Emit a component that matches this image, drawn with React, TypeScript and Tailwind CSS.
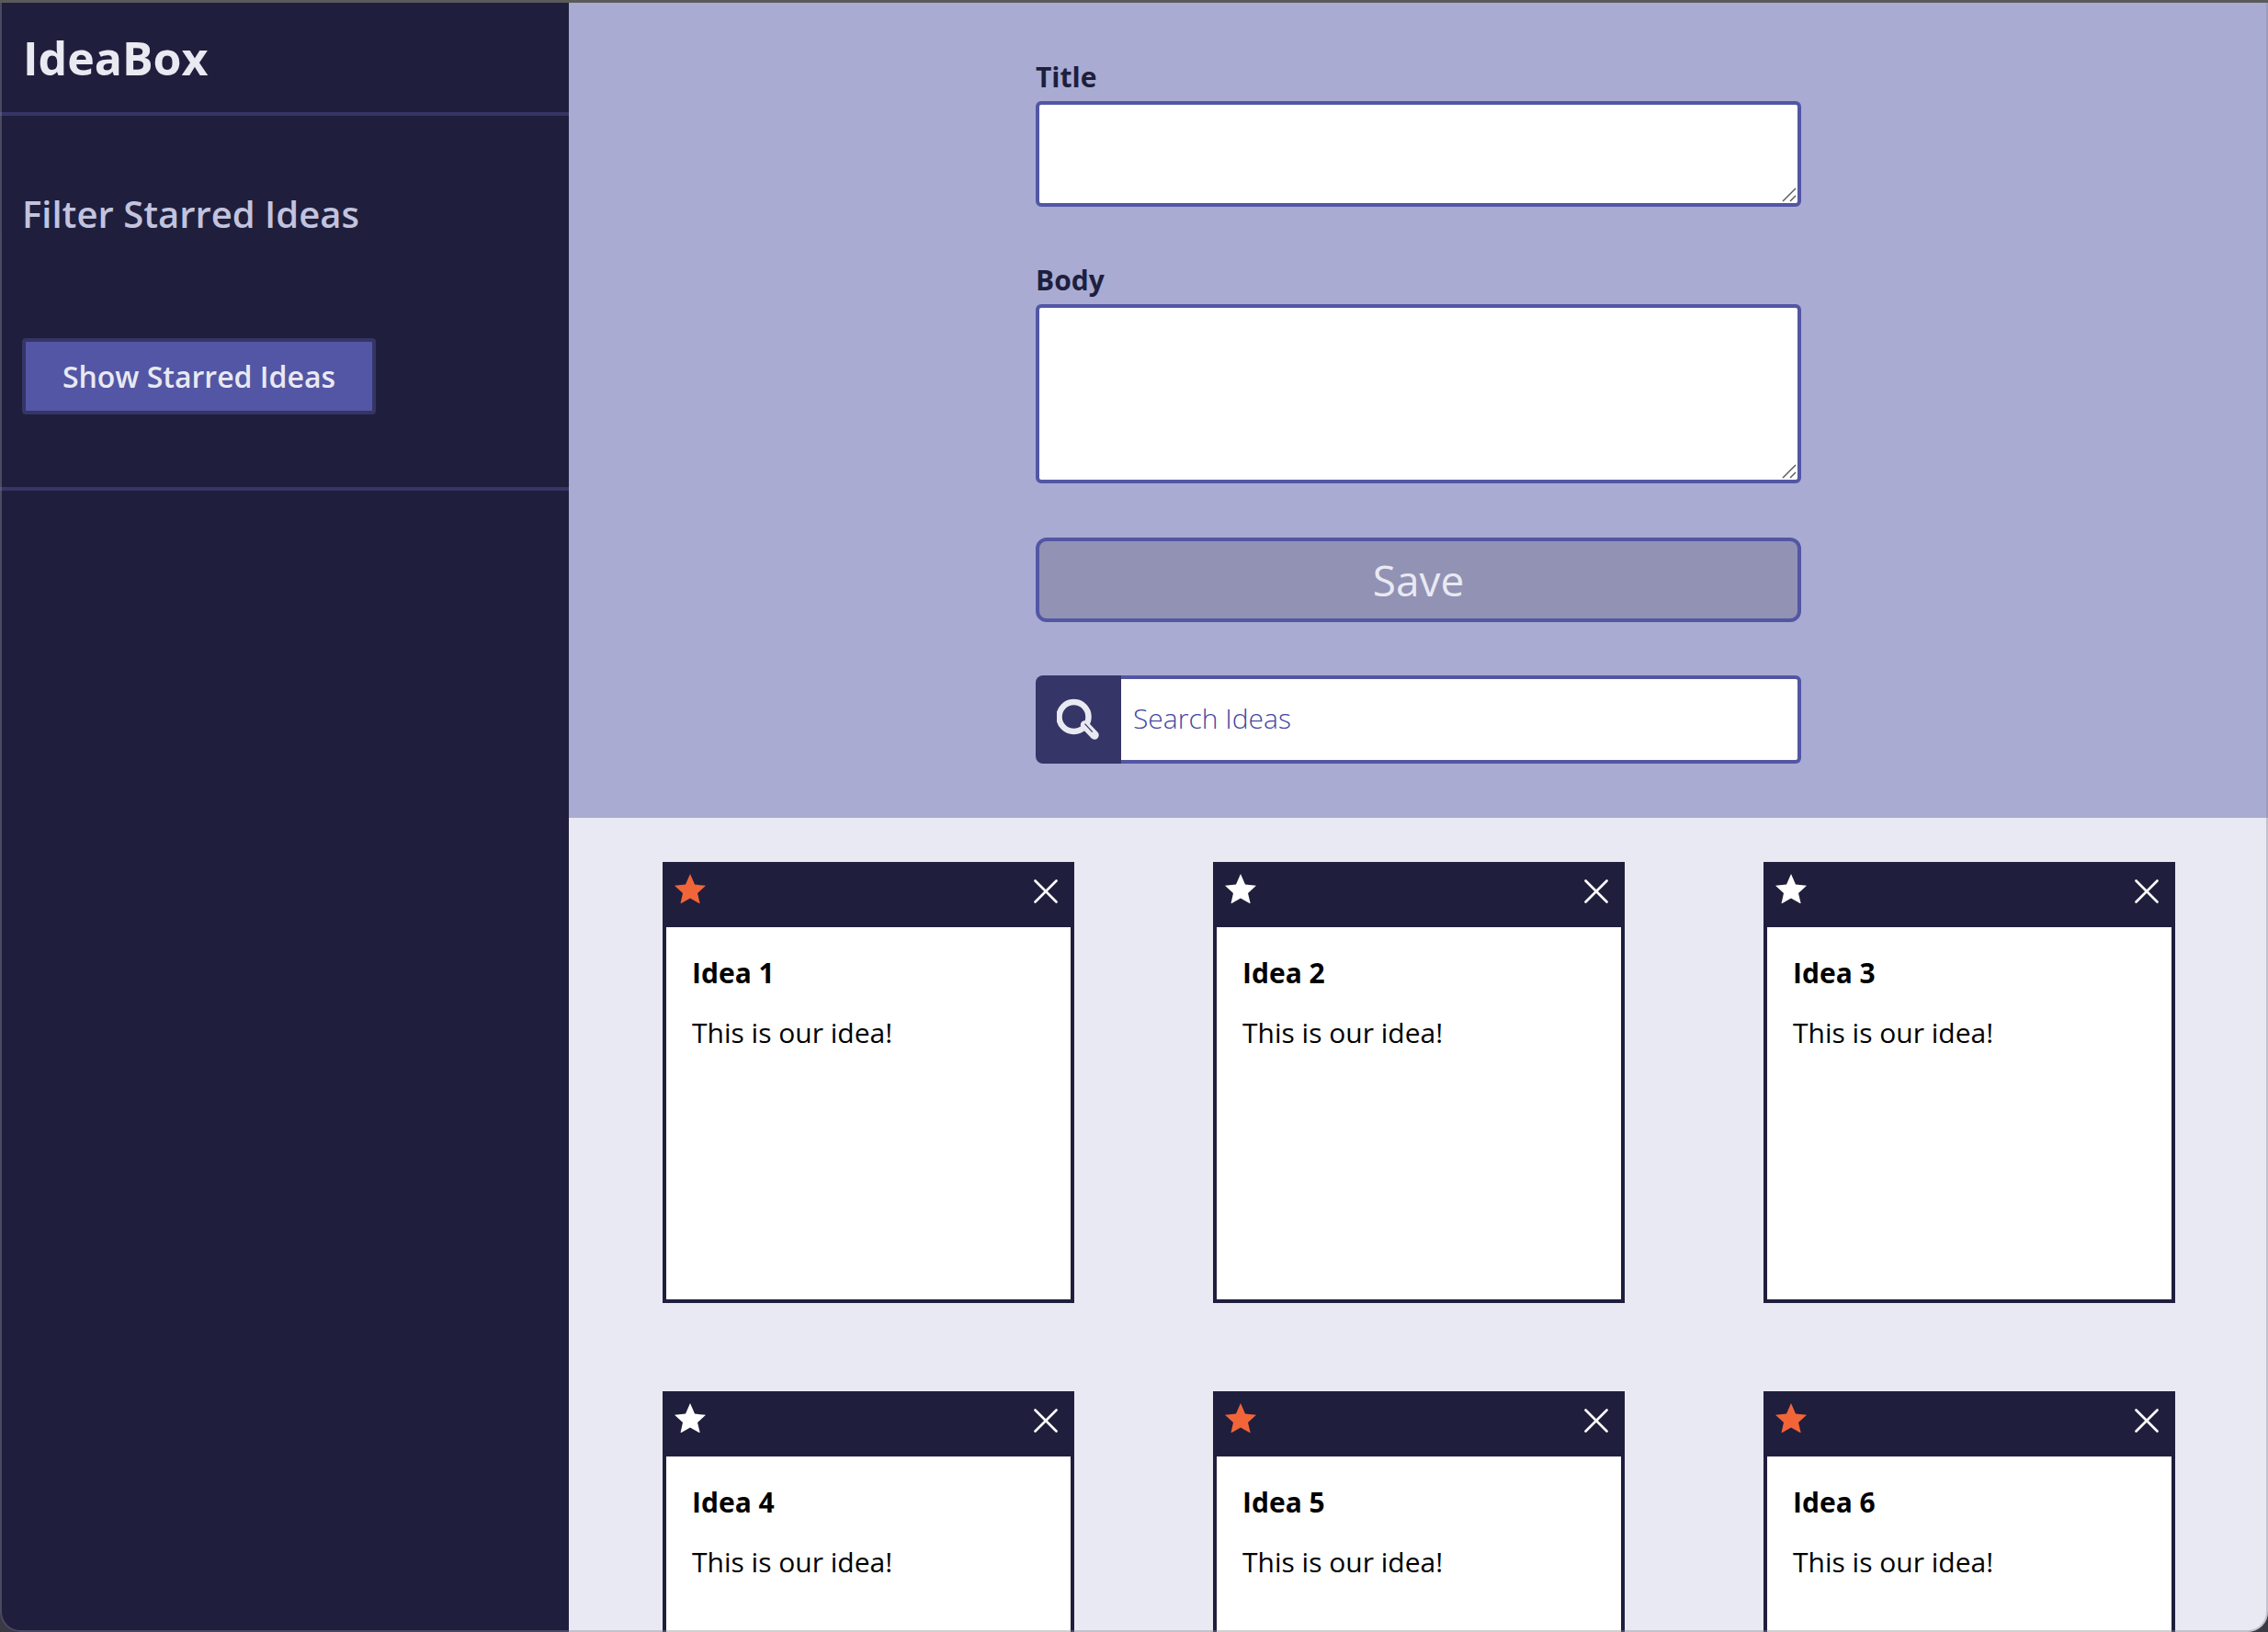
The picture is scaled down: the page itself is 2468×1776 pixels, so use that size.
const ideas = [
  { id: 1, starred: true },
  { id: 2, starred: false },
  { id: 3, starred: false },
  { id: 4, starred: false },
  { id: 5, starred: true },
  { id: 6, starred: true },
];

const Star = ({ starred }: { starred: boolean }) => (
  <svg viewBox="0 0 34 32" className="w-[34px] h-[32px]" fill={starred ? '#f26539' : '#ffffff'}>
    <polygon points="17,0 22,11.6 34,12.8 25,21 27.8,32.6 17,26.4 6.4,32.6 9,21 0,12.8 12,11.6" />
  </svg>
);

const Close = () => (
  <svg viewBox="0 0 26 26" className="w-[26px] h-[26px]" stroke="#ffffff" strokeWidth="2.6" strokeLinecap="round">
    <line x1="1.5" y1="1.5" x2="24.5" y2="24.5" />
    <line x1="24.5" y1="1.5" x2="1.5" y2="24.5" />
  </svg>
);

const Magnifier = () => (
  <svg viewBox="0 0 48 48" className="w-[48px] h-[48px]" fill="none">
    <circle cx="18.5" cy="21" r="16" stroke="#e9e9f2" strokeWidth="6.5" />
    <line x1="30.5" y1="30" x2="41" y2="41" stroke="#e9e9f2" strokeWidth="9.5" strokeLinecap="round" />
    <line x1="30.5" y1="28.7" x2="38.8" y2="37.7" stroke="#353567" strokeWidth="1.2" />
  </svg>
);

// the grip is drawn so it reads the same as the one in the picture
const Area = ({ height }: { height: string }) => (
  <div className="relative">
    <textarea className={`block w-full ${height} resize-none border-4 border-[#5356a4] rounded-[6px] bg-white outline-none`} />
    <svg viewBox="0 0 16 16" className="absolute right-[5px] bottom-[5px] w-[16px] h-[16px]" stroke="#5a5a5a" strokeWidth="1.4">
      <line x1="1" y1="15" x2="15" y2="1" />
      <line x1="9" y1="15" x2="15" y2="9" />
    </svg>
  </div>
);

const IdeaCard = ({ id, starred }: { id: number; starred: boolean }) => (
  <article className="w-[448px] h-[480px] border-4 border-[#1f1f3d] bg-white flex flex-col">
    <header className="h-[68px] -mt-px bg-[#1f1f3d] flex items-start justify-between pl-[9px] pr-[14px] pt-[10px] shrink-0">
      <Star starred={starred} />
      <span className="mt-[6px]">
        <Close />
      </span>
    </header>
    <div className="pl-[28px] pt-[28px] text-black">
      <h3 className="text-[30px] leading-[44px] font-bold">Idea {id}</h3>
      <p className="text-[30px] leading-[44px] mt-[21px]">This is our idea!</p>
    </div>
  </article>
);

export default function App() {
  return (
    <div className="relative w-[2468px] h-[1776px] bg-[#3a3a44] overflow-hidden font-['Open_Sans',sans-serif]">
      <div className="flex h-full rounded-b-[22px] overflow-hidden border-t-[3px] border-t-[#5a5a5a]">
        <aside className="w-[619px] shrink-0 bg-[#1f1f3d]">
          <div className="h-[123px] border-b-4 border-[#353567] pl-[25px] pt-[25px]">
            <h1 className="text-[50px] leading-[70px] font-bold text-[#e9e9f2]">IdeaBox</h1>
          </div>
          <div className="h-[408px] border-b-4 border-[#353567] pl-[24px] pt-[80px]">
            <h2 className="text-[40px] leading-[54px] font-semibold text-[#c2c3de]">Filter Starred Ideas</h2>
            <button className="mt-[108px] w-[385px] h-[83px] border-4 border-[#353567] rounded-[4px] bg-[#5356a4] text-[#e9e9f2] text-[32px] font-semibold">
              Show Starred Ideas
            </button>
          </div>
        </aside>
        <main className="flex-1 min-w-0 bg-[#e9e9f3]">
          <section className="h-[887px] bg-[#a9abd2] flex flex-col items-center pt-[59px]">
            <form className="w-[833px] flex flex-col">
              <label className="text-[30px] leading-[44px] font-bold text-[#1f1f3d] block h-[48px]">Title</label>
              <Area height="h-[115px]" />
              <label className="mt-[58px] text-[30px] leading-[44px] font-bold text-[#1f1f3d] block h-[48px]">Body</label>
              <Area height="h-[195px]" />
              <button
                type="button"
                className="mt-[59px] w-full h-[92px] border-4 border-[#5356a4] rounded-[12px] bg-[#9292b4] text-[#e9e9f2] text-[46px]"
              >
                Save
              </button>
              <div className="mt-[58px] flex h-[96px]">
                <span className="w-[93px] shrink-0 bg-[#353567] rounded-l-[8px] flex items-center justify-center">
                  <Magnifier />
                </span>
                <input
                  placeholder="Search Ideas"
                  className="flex-1 min-w-0 border-y-4 border-r-4 border-[#5356a4] rounded-r-[6px] bg-white pl-[13px] pb-[3px] text-[30px] font-light outline-none placeholder:text-[#4448a0]"
                />
              </div>
            </form>
          </section>
          <section className="grid grid-cols-[448px_448px_448px] gap-x-[151px] gap-y-[96px] pl-[102px] pt-[48px]">
            {ideas.map((idea) => (
              <IdeaCard key={idea.id} id={idea.id} starred={idea.starred} />
            ))}
          </section>
        </main>
      </div>
      <div className="absolute inset-0 top-[3px] pointer-events-none rounded-b-[22px] border-x-2 border-b-2 border-[#8a8a9a66]" />
    </div>
  );
}
